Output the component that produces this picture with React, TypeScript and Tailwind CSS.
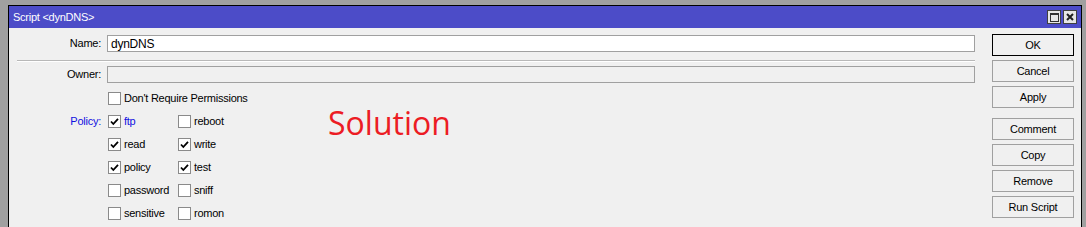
import React from "react";

const font = { fontFamily: '"Liberation Sans", Arial, sans-serif', letterSpacing: "-0.25px" };

function Check({ checked }: { checked: boolean }) {
  return (
    <div className="w-[13px] h-[13px] border border-[#8a8a8a] bg-white flex items-center justify-center shrink-0">
      {checked && (
        <svg width="11" height="11" viewBox="0 0 11 11">
          <path d="M2 5.5 L4.3 8 L9 2.8" fill="none" stroke="#000" strokeWidth="1.8" />
        </svg>
      )}
    </div>
  );
}

function CheckItem({ label, checked, blue }: { label: string; checked: boolean; blue?: boolean }) {
  return (
    <div className="flex items-center gap-[3px] h-[13px]">
      <Check checked={checked} />
      <span className={blue ? "text-[#1010e0]" : "text-black"}>{label}</span>
    </div>
  );
}

function Btn({ label, def }: { label: string; def?: boolean }) {
  return (
    <div
      className={
        "h-[22px] w-[82px] flex items-center justify-center bg-[#f0f0f0] border " +
        (def ? "border-black" : "border-[#a0a0a0]")
      }
    >
      {label}
    </div>
  );
}

export default function App() {
  const rows: [string, boolean, string, boolean][] = [
    ["ftp", true, "reboot", false],
    ["read", true, "write", true],
    ["policy", true, "test", true],
    ["password", false, "sniff", false],
    ["sensitive", false, "romon", false],
  ];
  return (
    <div className="w-[1086px] h-[227px] bg-[#a0a0a0] pt-[5px] pl-[8px] pr-[4px] overflow-hidden text-[11px] leading-none" style={font}>
      <div className="border-l border-t border-r border-black bg-[#f0f0f0] h-[240px] flex flex-col relative">
        <div className="h-[22px] bg-[#4c4cc8] flex items-center justify-between pl-[4px] pr-[4px] shrink-0">
          <span className="text-white text-[11px]">Script &lt;dynDNS&gt;</span>
          <div className="flex gap-[2px]">
            <div className="w-[14px] h-[14px] bg-[#e6e6e6] border border-[#404040] flex items-center justify-center">
              <div className="w-[9px] h-[9px] border border-[#303030] border-t-2"></div>
            </div>
            <div className="w-[14px] h-[14px] bg-[#e6e6e6] border border-[#404040] flex items-center justify-center">
              <svg width="8" height="8" viewBox="0 0 8 8">
                <path d="M1 1 L7 7 M7 1 L1 7" stroke="#202020" strokeWidth="2" />
              </svg>
            </div>
          </div>
        </div>
        <div className="flex">
          <div className="flex-1 flex flex-col">
            <div className="flex items-center mt-[7px] h-[17px]">
              <div className="w-[94px] text-right pr-[2px]">Name:</div>
              <div className="ml-[4px] flex-1 h-[17px] bg-white border border-[#a0a0a0] flex items-center pl-[3px] text-[12px]">dynDNS</div>
            </div>
            <div className="mt-[8px] ml-[8px] h-px bg-[#b8b8b8] border-b border-white box-content"></div>
            <div className="flex items-center mt-[4px] h-[17px]">
              <div className="w-[94px] text-right pr-[2px]">Owner:</div>
              <div className="ml-[4px] flex-1 h-[17px] bg-[#f0f0f0] border border-[#a0a0a0]"></div>
            </div>
            <div className="mt-[9px] ml-[99px]">
              <CheckItem label="Don't Require Permissions" checked={false} />
            </div>
            <div className="mt-[10px] flex flex-col gap-[10px]">
              {rows.map((r, i) => (
                <div key={i} className="flex items-center h-[13px]">
                  <div className="w-[94px] text-right pr-[2px] text-[#1010e0]">{i === 0 ? "Policy:" : ""}</div>
                  <div className="ml-[5px] w-[70px]">
                    <CheckItem label={r[0]} checked={r[1]} blue={i === 0} />
                  </div>
                  <CheckItem label={r[2]} checked={r[3]} />
                </div>
              ))}
            </div>
          </div>
          <div className="ml-[17px] mr-[7px] mt-[6px] flex flex-col">
            <div className="flex flex-col gap-[4px]">
              <Btn label="OK" def />
              <Btn label="Cancel" />
              <Btn label="Apply" />
            </div>
            <div className="flex flex-col gap-[4px] mt-[10px]">
              <Btn label="Comment" />
              <Btn label="Copy" />
              <Btn label="Remove" />
              <Btn label="Run Script" />
            </div>
          </div>
        </div>
        <div
          className="absolute left-[319px] top-[101px] text-[32px] text-[#ec1c24] leading-none"
          style={{ fontFamily: '"Open Sans", "Noto Sans", sans-serif', letterSpacing: "0px" }}
        >
          Solution
        </div>
      </div>
    </div>
  );
}
